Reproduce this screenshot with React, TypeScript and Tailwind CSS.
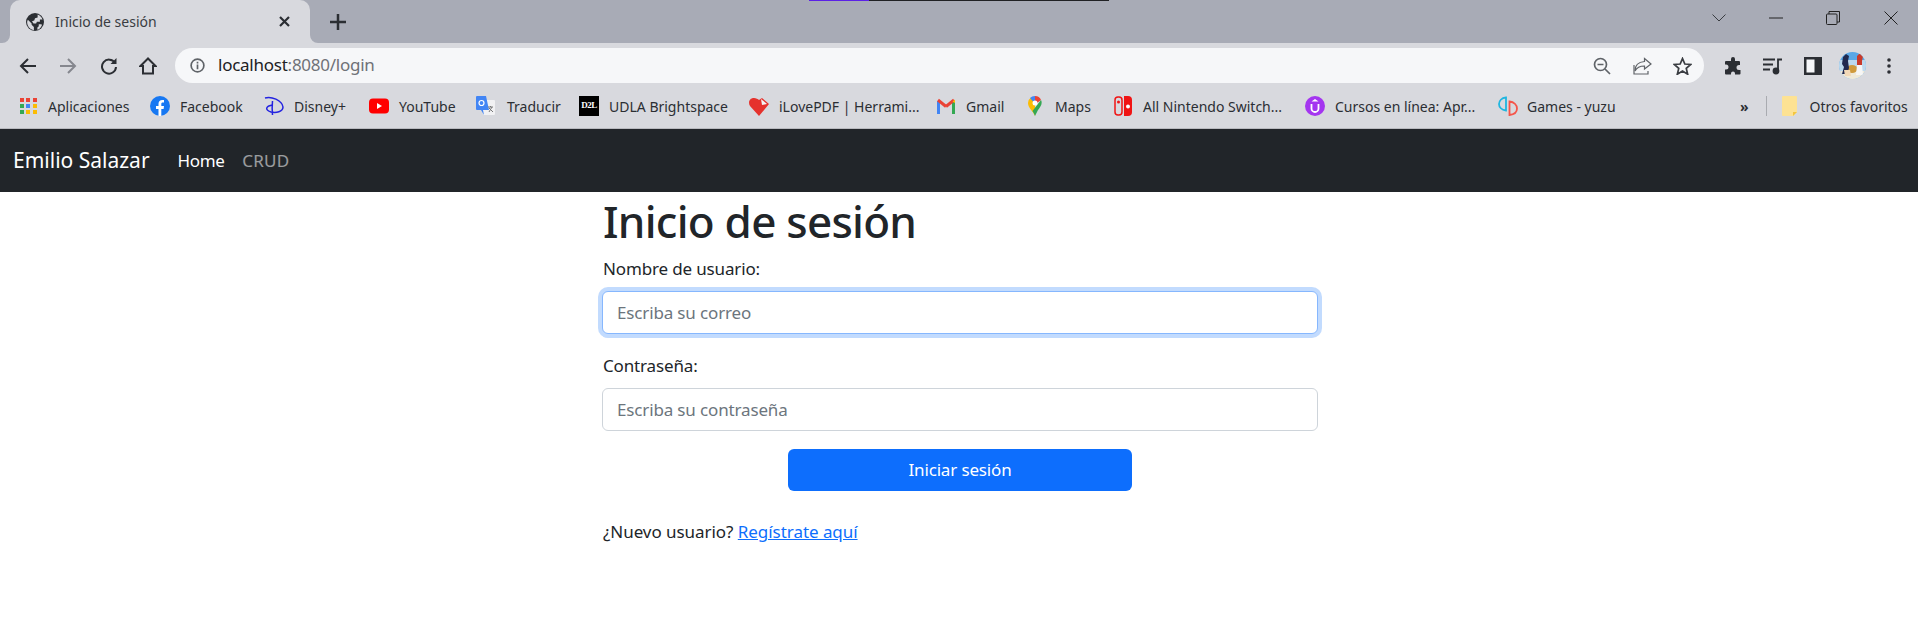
import { ReactNode } from "react";

const sans = "font-['Noto_Sans','Open_Sans',sans-serif]";

function GlobeIcon() {
  return (
    <svg width="18" height="18" viewBox="0 0 24 24">
      <circle cx="12" cy="12" r="12" fill="#2b2e33" />
      <path d="M2.500 9l5 5v1.500l3 3V23C5.500 22 1.500 17.500 1.500 12c0-1 .4-2 1-3z" fill="#d8d9de" />
      <path d="M15.500 2c3 1 5.500 3.500 6.500 6.500h-3.500v3h-4l-1 2.500H10l-2-3 3-1 1-3 3.500-1z" fill="#d8d9de" />
      <path d="M17 15h3.500l.8 1c-1 3-3 5.500-5.800 6.500l-.5-3 2-2z" fill="#d8d9de" />
    </svg>
  );
}

function ToolbarIcons() {
  return (
    <div className="flex items-center w-[175px] h-[35px] shrink-0">
      <svg className="ml-[19px]" width="18" height="18" viewBox="0 0 18 18" fill="none" stroke="#2b2e33" strokeWidth="2"><path d="M17 9H2M9 2L2 9l7 7" /></svg>
      <svg className="ml-[22px]" width="18" height="18" viewBox="0 0 18 18" fill="none" stroke="#85878e" strokeWidth="2"><path d="M1 9h15M9 2l7 7-7 7" /></svg>
      <svg className="ml-[23px]" width="18" height="18" viewBox="0 0 18 18" fill="none" stroke="#2b2e33" strokeWidth="2"><path d="M15 6a7 7 0 1 0 1 4" /><path d="M16.500 1v6h-6" fill="#2b2e33" stroke="none" /></svg>
      <svg className="ml-[21px]" width="18" height="18" viewBox="0 0 18 18" fill="none" stroke="#2b2e33" strokeWidth="2"><path d="M9 1.500L1.500 9H4v7.500h10V9h2.500z" strokeLinejoin="miter" /></svg>
    </div>
  );
}

function AppsIcon() {
  const colors = ["#ea4335", "#ea4335", "#ea4335", "#34a853", "#4285f4", "#fbbc04", "#34a853", "#fbbc04", "#fbbc04"];
  return (
    <div className="grid grid-cols-3 gap-[2px] w-[17px] h-[17px]">
      {colors.map((c, i) => (
        <svg key={i} width="4" height="4"><rect width="4" height="4" fill={c} /></svg>
      ))}
    </div>
  );
}

const bookmarks: { label: string; width: string; icon: ReactNode; gap: string }[] = [
  { label: "Aplicaciones", width: "w-[130px]", gap: "gap-[11px]", icon: <AppsIcon /> },
  {
    label: "Facebook", width: "w-[114px]", gap: "gap-[10px]",
    icon: (
      <svg width="20" height="20" viewBox="0 0 20 20"><circle cx="10" cy="10" r="10" fill="#1778f2" /><path d="M8.500 20v-7H6v-3h2.500V7.800C8.500 5.300 10 4 12.200 4c1 0 1.800.1 1.800.1v2.500h-1.200c-1.200 0-1.500.7-1.500 1.500V10h2.700l-.4 3h-2.300v7z" fill="#fff" /></svg>
    ),
  },
  {
    label: "Disney+", width: "w-[105px]", gap: "gap-[10px]",
    icon: (
      <svg width="20" height="20" viewBox="0 0 20 20" fill="none" stroke="#2323e0" strokeWidth="1.500"><path d="M1 2c6-2 17 2 18 9 0 5-7 6-12 5-6-2-6-6 2-7" /><path d="M8.500 5c-.5 5-.5 9 0 14" /></svg>
    ),
  },
  {
    label: "YouTube", width: "w-[107px]", gap: "gap-[10px]",
    icon: (
      <svg width="20" height="16" viewBox="0 0 20 16"><rect width="20" height="15" y=".5" rx="4" fill="#f00" /><path d="M8 5l5 3-5 3z" fill="#fff" /></svg>
    ),
  },
  {
    label: "Traducir", width: "w-[103px]", gap: "gap-[12px]",
    icon: (
      <svg width="19" height="20" viewBox="0 0 19 20"><rect x="7" y="4" width="12" height="15" rx="1" fill="#f1f1f3" /><path d="M1 0h9l3 14H7l1 5-3-5H1a1 1 0 0 1-1-1V1a1 1 0 0 1 1-1z" fill="#4285f4" /><circle cx="5.500" cy="7" r="2.500" fill="none" stroke="#fff" strokeWidth="1.200" /><path d="M12 11h5M14.500 10v1M13 16l3-5M13 12l4 4" stroke="#777" strokeWidth="1" fill="none" /></svg>
    ),
  },
  {
    label: "UDLA Brightspace", width: "w-[170px]", gap: "gap-[10px]",
    icon: (
      <div className="w-[20px] h-[20px] bg-black text-white text-[9px] leading-[18px] font-bold text-center font-['Liberation_Serif',serif] tracking-[-0.5px]">D2L</div>
    ),
  },
  {
    label: "iLovePDF | Herrami...", width: "w-[188px]", gap: "gap-[10px]",
    icon: (
      <svg width="20" height="20" viewBox="0 0 20 20"><path d="M10 20L1 10C-1 7 0 2 5 2c2 0 4 1 5 2l3-2 7 6z" fill="#e5322d" /><path d="M12 3l6 5-5 1z" fill="#f4f4f6" /></svg>
    ),
  },
  {
    label: "Gmail", width: "w-[91px]", gap: "gap-[11px]",
    icon: (
      <svg width="18" height="16" viewBox="0 0 18 16" fill="none"><path d="M1.500 16V3" stroke="#4285f4" strokeWidth="3" /><path d="M16.500 16V3" stroke="#34a853" strokeWidth="3" /><path d="M1 2l8 6.500" stroke="#ea4335" strokeWidth="3" /><path d="M9 8.500L17 2" stroke="#ea4335" strokeWidth="3" /><path d="M15.500 3.500L18 1.500V5z" fill="#fbbc04" /></svg>
    ),
  },
  {
    label: "Maps", width: "w-[86px]", gap: "gap-[13px]",
    icon: (
      <svg width="14" height="20" viewBox="0 0 14 20"><path d="M7 20C5 15 0 12 0 7a7 7 0 0 1 3-5.500L7 7z" fill="#fbbc04" /><path d="M7 0a7 7 0 0 0-5 2l3 3.500a2.500 2.500 0 0 1 2-.5z" fill="#4285f4" /><path d="M7 0c3 0 5 1.500 6 4L9 7a2.500 2.500 0 0 0-2-2z" fill="#ea4335" /><path d="M13 4c2 4-1 7-3 10l-3 6c-.5-2-1.500-3-2.500-5z" fill="#34a853" /><circle cx="7" cy="7" r="2.500" fill="#fff" /></svg>
    ),
  },
  {
    label: "All Nintendo Switch...", width: "w-[191px]", gap: "gap-[11px]",
    icon: (
      <svg width="18" height="20" viewBox="0 0 18 20"><rect x="1" y="1" width="7" height="18" rx="3" fill="none" stroke="#f01414" strokeWidth="1.500" /><path d="M10 0h4a4 4 0 0 1 4 4v12a4 4 0 0 1-4 4h-4z" fill="#f01414" /><circle cx="4.500" cy="6" r="1.500" fill="#f01414" /><circle cx="14" cy="10.500" r="2" fill="#fff" /></svg>
    ),
  },
  {
    label: "Cursos en línea: Apr...", width: "w-[193px]", gap: "gap-[10px]",
    icon: (
      <svg width="20" height="20" viewBox="0 0 20 20"><circle cx="10" cy="10" r="10" fill="#a435f0" /><path d="M6.500 8v4.500a3.500 3.500 0 0 0 7 0V8" fill="none" stroke="#fff" strokeWidth="1.800" /><path d="M10 3l3.500 2.500h-7z" fill="#fff" /></svg>
    ),
  },
  {
    label: "Games - yuzu", width: "w-[120px]", gap: "gap-[9px]",
    icon: (
      <svg width="20" height="20" viewBox="0 0 20 20" fill="none" strokeWidth="1.800"><path d="M8 1.500C3.500 2 1 5 1 8s2.500 6 7 6.500z" stroke="#1fb6e0" /><path d="M11.500 5.500c4.500.5 7.500 3.500 7.500 7s-3 6-7.500 6.500z" stroke="#f5554a" /></svg>
    ),
  },
];

function Browser() {
  return (
    <div className={`${sans} text-[14px] text-[#2b2e33]`}>
      {/* tabs */}
      <div className="relative h-[43px] bg-[#a8abb6] flex items-end">
        <div className="absolute top-0 left-[809px] w-[60px] h-[1px] bg-[#5b21e6]" />
        <div className="absolute top-0 left-[869px] w-[240px] h-[1px] bg-[#202124]" />
        <div className="relative ml-[10px] w-[300px] h-[43px] bg-[#d8d9de] rounded-t-[10px] flex items-center pl-[16px]">
          <svg className="absolute left-[-8px] bottom-0" width="8" height="8" viewBox="0 0 8 8"><path d="M8 0v8H0a8 8 0 0 0 8-8z" fill="#d8d9de" /></svg>
          <svg className="absolute right-[-8px] bottom-0" width="8" height="8" viewBox="0 0 8 8"><path d="M0 0v8h8a8 8 0 0 1-8-8z" fill="#d8d9de" /></svg>
          <GlobeIcon />
          <span className="ml-[11px] w-[224px] truncate text-[#3a3d42]">Inicio de sesión</span>
          <svg width="11" height="11" viewBox="0 0 11 11" stroke="#2b2e33" strokeWidth="2.200"><path d="M1 1l9 9M10 1l-9 9" /></svg>
        </div>
        <svg className="ml-[20px] mb-[13px]" width="16" height="16" viewBox="0 0 16 16" stroke="#2b2e33" strokeWidth="2.500"><path d="M8 0v16M0 8h16" /></svg>
        <div className="ml-auto flex items-center h-[43px] self-start text-[#2b2e33]">
          <svg className="mb-[7px]" width="14" height="8" viewBox="0 0 14 8" fill="none" stroke="#3a3d42"><path d="M.5.500L7 7l6.500-6.500" /></svg>
          <svg className="ml-[43px] mb-[7px]" width="14" height="2" viewBox="0 0 14 2" stroke="#222"><path d="M0 1h14" /></svg>
          <svg className="ml-[43px] mb-[7px]" width="14" height="14" viewBox="0 0 14 14" fill="none" stroke="#222"><path d="M3 3V.5h10.500V11H11" /><rect x=".5" y="3" width="10.500" height="10.500" rx="1" /></svg>
          <svg className="ml-[44px] mr-[20px] mb-[7px]" width="14" height="14" viewBox="0 0 14 14" fill="none" stroke="#222"><path d="M.5.500l13 13M13.500.500l-13 13" /></svg>
        </div>
      </div>
      {/* address bar */}
      <div className="h-[45px] bg-[#d8d9de] flex items-start pt-[5px]">
        <ToolbarIcons />
        <div className="w-[1529px] h-[35px] rounded-full bg-[#f6f7f9] flex items-center pl-[15px] pr-[12px]">
          <svg width="15" height="15" viewBox="0 0 16 16" fill="none" stroke="#5f6368" strokeWidth="1.800"><circle cx="8" cy="8" r="6.800" /><path d="M8 7v5M8 4v1.800" /></svg>
          <span className="ml-[13px] text-[17px] leading-[22px] mb-[2px] tracking-[-0.25px] text-[#202124]">localhost<span className="text-[#6f7177]">:8080/login</span></span>
          <svg className="ml-auto" width="18" height="18" viewBox="0 0 18 18" fill="none" stroke="#5f6368" strokeWidth="1.700"><circle cx="7.500" cy="7.500" r="6" /><path d="M4.500 7.500h6M12 12l5 5" /></svg>
          <svg className="ml-[22px]" width="19" height="18" viewBox="0 0 19 18" fill="none" stroke="#5f6368" strokeWidth="1.200"><path d="M11.500 1.500L18 7l-6.500 5V9C7 9 4 10 2 14c0-5 3-9 9.500-9.500z" /><path d="M1 8v9h14v-3" /></svg>
          <svg className="ml-[21px]" width="19" height="18" viewBox="0 0 24 23" fill="none" stroke="#3a3d42" strokeWidth="2.200"><path d="M12 2l3 7 7.500.6-5.700 5 1.800 7.400L12 18l-6.600 4 1.800-7.400-5.700-5L9 9z" /></svg>
        </div>
        <div className="flex items-center h-[35px]">
          <svg className="ml-[20px]" width="18" height="18" viewBox="0 0 18 18" fill="#2b2e33"><path d="M7 2a2 2 0 0 1 4 0v2h4a1 1 0 0 1 1 1v3h-1a2 2 0 0 0 0 5h1.500v3.500a1 1 0 0 1-1 1H11v-1a2 2 0 0 0-4 0v1H2a1 1 0 0 1-1-1v-4h1a2.500 2.500 0 0 0 0-5H1V5a1 1 0 0 1 1-1h5z" /></svg>
          <svg className="ml-[21px]" width="19" height="18" viewBox="0 0 19 18" fill="none" stroke="#2b2e33" strokeWidth="1.800"><path d="M0 2.500h12M0 7.500h10M0 12.500h7" /><circle cx="13" cy="14" r="2.500" fill="#2b2e33" /><path d="M15 14V2.500h4" /></svg>
          <svg className="ml-[22px]" width="18" height="18" viewBox="0 0 18 18"><path d="M0 0h18v18H0z" fill="#2b2e33" /><rect x="2.500" y="2.500" width="8" height="13" fill="#f6f7f9" /></svg>
          <svg className="ml-[17px]" width="27" height="27" viewBox="0 0 27 27">
            <clipPath id="av"><circle cx="13.500" cy="13.500" r="13.500" /></clipPath>
            <g clipPath="url(#av)">
              <rect width="27" height="27" fill="#5aa7e6" />
              <path d="M0 8h27v19H0z" fill="#bcd9ee" />
              <rect y="19" width="27" height="8" fill="#efe9d8" />
              <ellipse cx="13" cy="17" rx="5.500" ry="4" fill="#cf9a3c" />
              <path d="M4 5l3-3 3 2-1 5 1 7-2 6H3l2-7-2-3z" fill="#20294f" />
              <path d="M18 4l3-3 3 3-1 5v4h-5z" fill="#c93a2b" />
              <path d="M18 13h5l1 10h-7z" fill="#f6f6f6" />
              <path d="M5 18h6l1 6H6z" fill="#f2d9b8" />
            </g>
          </svg>
          <svg className="ml-[21px]" width="4" height="16" viewBox="0 0 4 16" fill="#2b2e33"><circle cx="2" cy="2" r="1.800" /><circle cx="2" cy="8" r="1.800" /><circle cx="2" cy="14" r="1.800" /></svg>
        </div>
      </div>
      {/* bookmarks */}
      <div className="h-[41px] bg-[#d8d9de] flex items-center pl-[20px] pb-[4px] border-b border-b-[#b9babf]">
        {bookmarks.map((b) => (
          <div key={b.label} className={`flex items-center ${b.gap} ${b.width} shrink-0 whitespace-nowrap`}>
            {b.icon}
            <span>{b.label}</span>
          </div>
        ))}
        <span className="ml-[122px] font-bold text-[14px]">»</span>
        <div className="ml-[17px] w-[1px] h-[20px] bg-[#a9abb0]" />
        <svg className="ml-[15px]" width="15" height="20" viewBox="0 0 15 20"><path d="M1 0h13a1 1 0 0 1 1 1v15l-4 4H1a1 1 0 0 1-1-1V1a1 1 0 0 1 1-1z" fill="#fde293" /><path d="M11 20v-4h4z" fill="#f3c63f" /></svg>
        <span className="ml-[13px] whitespace-nowrap">Otros favoritos</span>
      </div>
    </div>
  );
}

export default function App() {
  return (
    <div className="h-[644px] overflow-hidden bg-white">
      <Browser />
      <nav className={`${sans} h-[63px] bg-[#212529] flex items-center`}>
        <a className="ml-[13px] text-[21px] text-white">Emilio Salazar</a>
        <a className="ml-[28px] text-[17px] text-white tracking-[-0.4px]">Home</a>
        <a className="ml-[18px] text-[17px] text-white/55 tracking-[0.2px]">CRUD</a>
      </nav>
      <main className={`${sans} w-[718px] pl-[2px] mx-auto text-[17px] tracking-[-0.15px] text-[#212529]`}>
        <h1 className="ml-[1px] text-[44px] leading-[58px] font-medium tracking-[-0.75px]">Inicio de sesión</h1>
        <label className="ml-[1px] block mt-[7px] leading-[24px]">Nombre de usuario:</label>
        <input
          className="block mt-[10px] w-full h-[43px] px-[14px] bg-white border border-[#86b7fe] rounded-[6px] outline-none shadow-[0_0_0_4px_rgba(13,110,253,0.25)] placeholder:text-[#6c757d]"
          placeholder="Escriba su correo"
        />
        <label className="ml-[1px] block mt-[20px] leading-[24px]">Contraseña:</label>
        <input
          className="block mt-[10px] w-full h-[43px] px-[14px] bg-white border border-[#ced4da] rounded-[6px] outline-none placeholder:text-[#6c757d]"
          placeholder="Escriba su contraseña"
        />
        <button className="block mx-auto mt-[18px] w-[344px] h-[42px] rounded-[6px] bg-[#0d6efd] text-white">Iniciar sesión</button>
        <p className="ml-[1px] mt-[29px] leading-[24px] tracking-[-0.05px]">
          ¿Nuevo usuario? <a className="text-[#0d6efd] underline">Regístrate aquí</a>
        </p>
      </main>
    </div>
  );
}
